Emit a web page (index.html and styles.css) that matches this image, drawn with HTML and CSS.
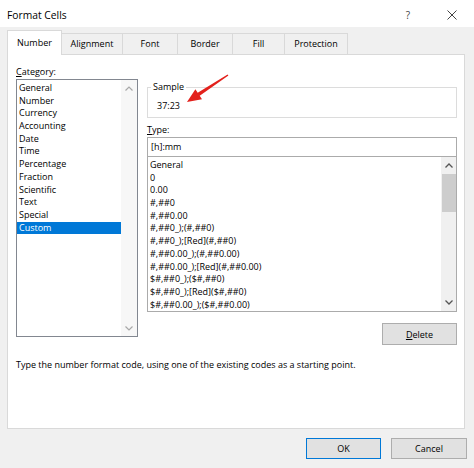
FILE: index.html
```html
<!DOCTYPE html>
<html lang="en">
<head>
  <meta charset="UTF-8">
  <meta name="viewport" content="width=device-width, initial-scale=1.0">
  <title>Format Cells</title>
  <link rel="stylesheet" href="styles.css">
</head>
<body>
  <div class="window">
    <div class="titlebar">
      <span class="title">Format Cells</span>
      <span class="help">?</span>
      <span class="close">
        <svg width="10" height="10" viewBox="0 0 10 10"><path d="M0.5 0.5L9.5 9.5M9.5 0.5L0.5 9.5" stroke="#444" stroke-width="1" fill="none"/></svg>
      </span>
    </div>

    <div class="tabs">
      <div class="tab active">Number</div>
      <div class="tab w-align">Alignment</div>
      <div class="tab">Font</div>
      <div class="tab">Border</div>
      <div class="tab w-fill">Fill</div>
      <div class="tab w-prot">Protection</div>
    </div>

    <div class="panel">
      <!-- annotation arrow drawn over the dialog -->
      <svg class="pointer" width="52" height="38" viewBox="0 0 52 38">
        <polygon points="7,32 22,29.3 19.7,25.8 48.4,5.6 47.6,4.4 17.7,22.8 15.4,19.3" fill="#e3211c"/>
      </svg>

      <div class="columns">
        <div class="category">
          <div class="label"><u>C</u>ategory:</div>
          <div class="listbox cat-box">
            <ul class="items">
              <li>General</li>
              <li>Number</li>
              <li>Currency</li>
              <li>Accounting</li>
              <li>Date</li>
              <li>Time</li>
              <li>Percentage</li>
              <li>Fraction</li>
              <li>Scientific</li>
              <li>Text</li>
              <li>Special</li>
              <li class="selected">Custom</li>
            </ul>
            <div class="scrollbar disabled">
              <div class="arrow"><svg width="8" height="5" viewBox="0 0 8 5"><path d="M0.5 4.5L4 1L7.5 4.5" stroke="#a8a8a8" stroke-width="1.2" fill="none"/></svg></div>
              <div class="track"></div>
              <div class="arrow"><svg width="8" height="5" viewBox="0 0 8 5"><path d="M0.5 0.5L4 4L7.5 0.5" stroke="#a8a8a8" stroke-width="1.2" fill="none"/></svg></div>
            </div>
          </div>
        </div>

        <div class="format">
          <fieldset class="sample">
            <legend>Sample</legend>
            <div class="sample-value">37:23</div>
          </fieldset>
          <div class="label type-label"><u>T</u>ype:</div>
          <div class="input">[h]:mm</div>
          <div class="listbox codes">
            <ul class="items">
              <li>General</li>
              <li>0</li>
              <li>0.00</li>
              <li>#,##0</li>
              <li>#,##0.00</li>
              <li>#,##0_);(#,##0)</li>
              <li>#,##0_);[Red](#,##0)</li>
              <li>#,##0.00_);(#,##0.00)</li>
              <li>#,##0.00_);[Red](#,##0.00)</li>
              <li>$#,##0_);($#,##0)</li>
              <li>$#,##0_);[Red]($#,##0)</li>
              <li>$#,##0.00_);($#,##0.00)</li>
            </ul>
            <div class="scrollbar">
              <div class="arrow"><svg width="8" height="5" viewBox="0 0 8 5"><path d="M0.5 4.5L4 1L7.5 4.5" stroke="#555" stroke-width="1.3" fill="none"/></svg></div>
              <div class="track"><div class="thumb"></div></div>
              <div class="arrow"><svg width="8" height="5" viewBox="0 0 8 5"><path d="M0.5 0.5L4 4L7.5 0.5" stroke="#555" stroke-width="1.3" fill="none"/></svg></div>
            </div>
          </div>
          <div class="actions">
            <button class="btn"><u>D</u>elete</button>
          </div>
        </div>
      </div>

      <p class="hint">Type the number format code, using one of the existing codes as a starting point.</p>
    </div>

    <div class="footer">
      <button class="btn default">OK</button>
      <button class="btn">Cancel</button>
    </div>
  </div>
</body>
</html>
```

FILE: styles.css
```css
body {
  margin: 0;
  padding: 0;
  font-family: 'Open Sans', 'Noto Sans', sans-serif;
  font-size: 9px;
  color: #000;
  background: #f0f0f0;
  overflow: hidden;
}

.window {
  width: 474px;
  height: 468px;
  display: flex;
  flex-direction: column;
  background: #f0f0f0;
}

.titlebar {
  height: 27px;
  background: #fff;
  display: flex;
  align-items: center;
  padding-left: 7px;
  padding-top: 2px;
  box-sizing: border-box;
}

.title {
  font-size: 10.3px;
  flex: 1;
}

.help {
  font-size: 10px;
  color: #444;
  width: 10px;
  margin-right: 34px;
  text-align: center;
}

.close {
  width: 10px;
  height: 10px;
  margin-right: 17px;
  display: flex;
}

.tabs {
  display: flex;
  align-items: flex-end;
  height: 24px;
  margin: 3px 9px 0 7px;
}

.tab {
  width: 55px;
  height: 21px;
  box-sizing: border-box;
  border: 1px solid #d9d9d9;
  border-left: none;
  border-bottom: none;
  text-align: center;
  line-height: 20px;
  background: #f0f0f0;
}

.tab.active {
  height: 25px;
  margin-bottom: -1px;
  border-left: 1px solid #d9d9d9;
  background: #fff;
  position: relative;
  z-index: 1;
  line-height: 23px;
}

.w-align { width: 61px; }
.w-fill { width: 52px; }
.w-prot { width: 63px; }

.panel {
  height: 375px;
  box-sizing: border-box;
  margin: 0 9px 0 7px;
  padding: 10px 7px 0 8px;
  background: #fff;
  border: 1px solid #d9d9d9;
  position: relative;
}

.pointer {
  position: absolute;
  left: 172px;
  top: 15px;
}

.columns {
  display: grid;
  grid-template-columns: 122px 310px;
  column-gap: 9px;
  align-items: start;
}

.label {
  line-height: 14px;
  height: 14px;
}

.listbox {
  border: 1px solid #828790;
  box-sizing: border-box;
  display: flex;
  background: #fff;
}

.cat-box {
  height: 258px;
}

.items {
  list-style: none;
  margin: 0;
  padding: 2px 0 0;
  flex: 1;
  overflow: hidden;
}

.items li {
  height: 12.7px;
  line-height: 12.7px;
  padding-left: 2px;
  white-space: nowrap;
}

.items li.selected {
  background: #0078d7;
  color: #fff;
}

.scrollbar {
  width: 16px;
  display: flex;
  flex-direction: column;
  background: #f7f7f7;
}

.scrollbar .arrow {
  height: 16px;
  display: flex;
  align-items: center;
  justify-content: center;
}

.scrollbar .track {
  flex: 1;
}

.codes {
  height: 156px;
  margin-top: -1px;
  border-color: #ababab;
}

.codes .items li {
  padding-left: 2px;
}

.codes .scrollbar {
  width: 15px;
  background: #f0f0f0;
}

.codes .scrollbar .arrow {
  height: 17px;
}

.thumb {
  height: 38px;
  margin-left: 1px;
  background: #cdcdcd;
}

.sample {
  margin: 15px 0 0;
  padding: 5px 9px 3px;
  border: 1px solid #dcdcdc;
  height: 38px;
  box-sizing: border-box;
  min-width: 0;
}

.sample legend {
  padding: 0 2px;
  margin-left: -6px;
  line-height: 14px;
}

.sample-value {
  line-height: 14px;
}

.type-label {
  margin-top: 5px;
}

.input {
  height: 20px;
  box-sizing: border-box;
  border: 1px solid #ababab;
  padding-left: 3px;
  line-height: 18px;
}

.actions {
  display: flex;
  justify-content: flex-end;
  margin-top: 11px;
}

.btn {
  font-family: inherit;
  font-size: 9px;
  color: #000;
  width: 75px;
  height: 22px;
  padding: 0;
  background: #e1e1e1;
  border: 1px solid #adadad;
}

.btn.default {
  border-color: #0078d7;
}

.hint {
  margin: 13px 0 0;
  line-height: 14px;
}

.footer {
  display: flex;
  justify-content: flex-end;
  gap: 10px;
  padding: 9px 7px 0 0;
}

.footer .btn {
  height: 21px;
}

.footer .btn + .btn {
  width: 76px;
}
```
